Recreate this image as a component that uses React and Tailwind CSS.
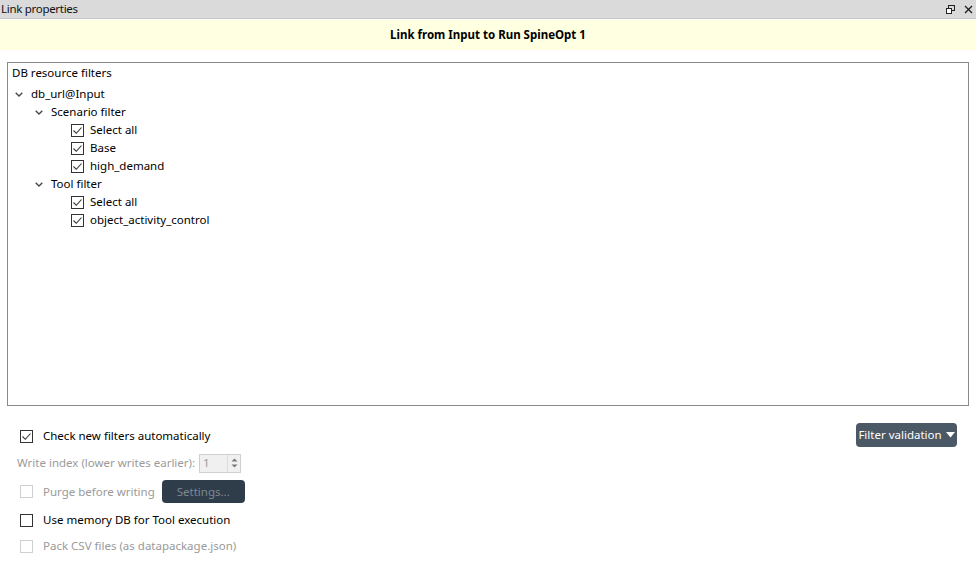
const font = { fontFamily: '"Segoe UI", "Noto Sans", "Open Sans", sans-serif' };

function Check({ checked, disabled }) {
  return (
    <span
      className={
        "inline-flex w-[13px] h-[13px] items-center justify-center border bg-white shrink-0 " +
        (disabled ? "border-[#cfcfcf]" : "border-[#333]")
      }
    >
      {checked && (
        <svg width="11" height="11" viewBox="0 0 11 11">
          <path d="M1.5 5.5 L4.3 8.3 L9.5 2.5" fill="none" stroke="#333" strokeWidth="1.1" />
        </svg>
      )}
    </span>
  );
}

function Chevron() {
  return (
    <svg width="8" height="5" viewBox="0 0 8 5" className="mr-[8px] shrink-0">
      <path d="M0.7 0.7 L4 4 L7.3 0.7" fill="none" stroke="#444" strokeWidth="1.3" />
    </svg>
  );
}

function TreeRow({ indent, chevron, checked, label }) {
  return (
    <div className="flex items-center h-[18px]" style={{ paddingLeft: indent }}>
      {chevron && <Chevron />}
      {checked !== undefined && (
        <span className="mr-[6px] flex">
          <Check checked={checked} />
        </span>
      )}
      <span>{label}</span>
    </div>
  );
}

export default function App() {
  return (
    <div className="w-[976px] h-[568px] bg-white text-[11.5px] text-black flex flex-col" style={font}>
      <div className="h-[19px] bg-[#dadada] border-b border-[#c8c8c8] flex items-center justify-between pl-[1px] pr-[3px]">
        <span className="text-[11.5px] text-[#111] tracking-[-0.3px]">Link properties</span>
        <div className="flex items-center gap-[9px] text-[#222]">
          <svg width="9" height="9" viewBox="0 0 9 9">
            <rect x="2.5" y="0.5" width="6" height="5" fill="none" stroke="#222" />
            <rect x="0.5" y="3.5" width="5" height="5" fill="white" stroke="#222" />
          </svg>
          <svg width="9" height="9" viewBox="0 0 9 9">
            <path d="M1 1 L8 8 M8 1 L1 8" stroke="#222" strokeWidth="1.4" />
          </svg>
        </div>
      </div>
      <div className="h-[30px] bg-[#ffffe1] flex items-center justify-center font-bold text-[11.5px] mt-[1px]">
        Link from Input to Run SpineOpt 1
      </div>
      <div className="px-[7px] pt-[12px]">
        <div className="h-[344px] border border-[#8a8a8a] bg-white pt-[1px] pl-[4px]">
          <div className="h-[18px] flex items-center mb-[3px]">DB resource filters</div>
          <TreeRow indent={3} chevron label="db_url@Input" />
          <TreeRow indent={23} chevron label="Scenario filter" />
          <TreeRow indent={59} checked label="Select all" />
          <TreeRow indent={59} checked label="Base" />
          <TreeRow indent={59} checked label="high_demand" />
          <TreeRow indent={23} chevron label="Tool filter" />
          <TreeRow indent={59} checked label="Select all" />
          <TreeRow indent={59} checked label="object_activity_control" />
        </div>
      </div>
      <div className="flex justify-between pl-[20px] pr-[19px] pt-[15px]">
        <div className="flex flex-col">
          <div className="flex items-center h-[26px] gap-[10px] mt-[2px]">
            <Check checked />
            <span>Check new filters automatically</span>
          </div>
          <div className="flex items-center h-[28px] -ml-[3px] gap-[4px] text-[#9a9a9a]">
            <span>Write index (lower writes earlier):</span>
            <div className="w-[42px] h-[19px] border border-[#cfcfcf] bg-[#f0f0f0] flex items-center justify-between pl-[3px]">
              <span>1</span>
              <div className="flex flex-col items-center justify-center w-[13px] h-full border-l border-[#dcdcdc]">
                <svg width="7" height="4" viewBox="0 0 7 4"><path d="M0.5 3.5 L3.5 0.5 L6.5 3.5 Z" fill="#777" /></svg>
                <svg width="7" height="4" viewBox="0 0 7 4" className="mt-[2px]"><path d="M0.5 0.5 L3.5 3.5 L6.5 0.5 Z" fill="#777" /></svg>
              </div>
            </div>
          </div>
          <div className="flex items-center h-[29px] gap-[10px] text-[#9a9a9a]">
            <Check disabled />
            <span>Purge before writing</span>
            <span className="ml-[-3px] w-[83px] h-[23px] rounded-[4px] bg-[#2f3d4a] text-[#7d8893] flex items-center justify-center">
              Settings...
            </span>
          </div>
          <div className="flex items-center h-[28px] gap-[10px]">
            <Check />
            <span>Use memory DB for Tool execution</span>
          </div>
          <div className="flex items-center h-[24px] gap-[10px] text-[#9a9a9a]">
            <Check disabled />
            <span>Pack CSV files (as datapackage.json)</span>
          </div>
        </div>
        <div className="mt-[2px]">
          <div className="h-[24px] w-[101px] rounded-[4px] bg-[#4b5866] text-white text-[11.5px] flex items-center justify-center gap-[4px]">
            <span>Filter validation</span>
            <svg width="9" height="6" viewBox="0 0 9 6"><path d="M0 0 L9 0 L4.5 5.5 Z" fill="white" /></svg>
          </div>
        </div>
      </div>
    </div>
  );
}
